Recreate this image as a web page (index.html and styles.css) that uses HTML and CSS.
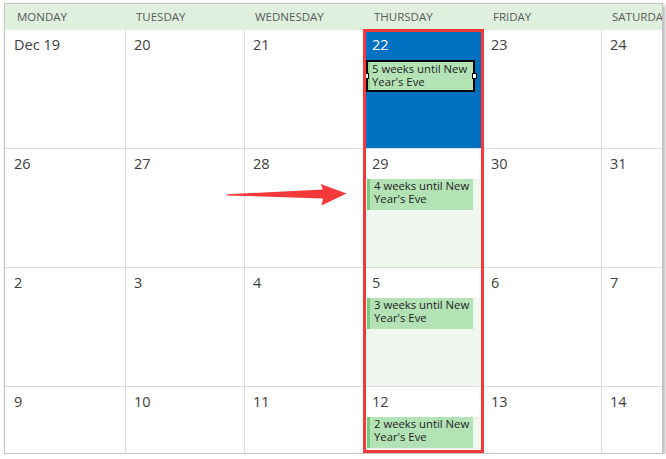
FILE: index.html
```html
<!DOCTYPE html>
<html>
<head>
<meta charset="utf-8">
<link rel="stylesheet" href="styles.css">
</head>
<body>
<div class="cal">
  <div class="head">
    <div class="hd">MONDAY</div>
    <div class="hd">TUESDAY</div>
    <div class="hd">WEDNESDAY</div>
    <div class="hd">THURSDAY</div>
    <div class="hd">FRIDAY</div>
    <div class="hd">SATURDAY</div>
  </div>
  <div class="grid">
    <div class="cell"><div class="date">Dec 19</div></div>
    <div class="cell"><div class="date">20</div></div>
    <div class="cell"><div class="date">21</div></div>
    <div class="cell today">
      <div class="date">22</div>
      <div class="body">
        <div class="event sel"><span class="handle left"></span>5 weeks until New Year's Eve<span class="handle right"></span></div>
      </div>
    </div>
    <div class="cell"><div class="date">23</div></div>
    <div class="cell"><div class="date">24</div></div>

    <div class="cell"><div class="date">26</div></div>
    <div class="cell"><div class="date">27</div></div>
    <div class="cell"><div class="date">28</div></div>
    <div class="cell thu">
      <div class="date">29</div>
      <div class="body"><div class="event">4 weeks until New Year's Eve</div></div>
    </div>
    <div class="cell"><div class="date">30</div></div>
    <div class="cell"><div class="date">31</div></div>

    <div class="cell"><div class="date">2</div></div>
    <div class="cell"><div class="date">3</div></div>
    <div class="cell"><div class="date">4</div></div>
    <div class="cell thu">
      <div class="date">5</div>
      <div class="body"><div class="event">3 weeks until New Year's Eve</div></div>
    </div>
    <div class="cell"><div class="date">6</div></div>
    <div class="cell"><div class="date">7</div></div>

    <div class="cell"><div class="date">9</div></div>
    <div class="cell"><div class="date">10</div></div>
    <div class="cell"><div class="date">11</div></div>
    <div class="cell thu">
      <div class="date">12</div>
      <div class="body"><div class="event">2 weeks until New Year's Eve</div></div>
    </div>
    <div class="cell"><div class="date">13</div></div>
    <div class="cell"><div class="date">14</div></div>
  </div>
  <div class="hilite"></div>
  <svg class="arrow" width="130" height="40" viewBox="220 175 130 40">
    <polygon points="227,194.2 323,189.6 320.5,184 346.5,193.6 321.5,205.6 323,198.4 227,195.4" fill="#f5383a"/>
  </svg>
</div>
</body>
</html>
```

FILE: styles.css
```css
html, body {
  margin: 0;
  padding: 0;
  background: #ffffff;
}

body {
  font-family: "Open Sans", "Noto Sans", sans-serif;
}

.cal {
  position: relative;
  box-sizing: border-box;
  width: 659px;
  margin: 3px 0 0 4px;
  border: 1px solid #c4c4c4;
  box-shadow: 2px 2px 4px rgba(0, 0, 0, 0.3);
  background: #ffffff;
}

.head {
  display: grid;
  grid-template-columns: 120px 118px 118px 118px 118px 60px;
  column-gap: 1px;
  height: 26px;
  background: #dff0df;
}

.hd {
  font-size: 11.5px;
  line-height: 26px;
  color: #595959;
  padding-left: 10px;
  white-space: nowrap;
  overflow: hidden;
}

.hd:first-child {
  padding-left: 12px;
}

.grid {
  display: grid;
  grid-template-columns: 120px 118px 118px 118px 118px 60px;
  grid-template-rows: 118px 118px 118px 66px;
  gap: 1px;
  background: #dcdcdc;
}

.cell {
  display: flex;
  flex-direction: column;
  background: #ffffff;
  min-width: 0;
  overflow: hidden;
}

.date {
  font-size: 14.5px;
  line-height: 20px;
  color: #404040;
  padding: 5px 0 0 8px;
  white-space: nowrap;
}

.cell:nth-child(6n+1) .date {
  padding-left: 9px;
}

.body {
  flex: 1;
  margin-top: 5px;
}

.thu .body {
  background: #eff7ef;
}

.today {
  background: #0070c0;
}

.today .date {
  color: #ffffff;
}

.event {
  position: relative;
  box-sizing: border-box;
  height: 31px;
  margin: 0 9px 0 3px;
  padding: 0 0 0 4px;
  background: #b3e3b5;
  border-left: 3px solid #7cc780;
  font-size: 11.3px;
  line-height: 13px;
  color: #222222;
}

.event.sel {
  height: 32px;
  margin: 0 7px 0 2px;
  padding-left: 4px;
  border: 2px solid #000000;
  box-shadow: inset 2px 0 0 #8fd492;
  line-height: 13px;
}

.handle {
  position: absolute;
  top: 11px;
  width: 3px;
  height: 4px;
  background: #ffffff;
  border: 1px solid #000000;
}

.handle.left {
  left: -4px;
}

.handle.right {
  right: -4px;
}

.hilite {
  position: absolute;
  left: 358px;
  top: 25px;
  width: 121px;
  height: 424px;
  box-sizing: border-box;
  border: 3px solid #f5383a;
  pointer-events: none;
}

.arrow {
  position: absolute;
  left: 215px;
  top: 171px;
}
```
